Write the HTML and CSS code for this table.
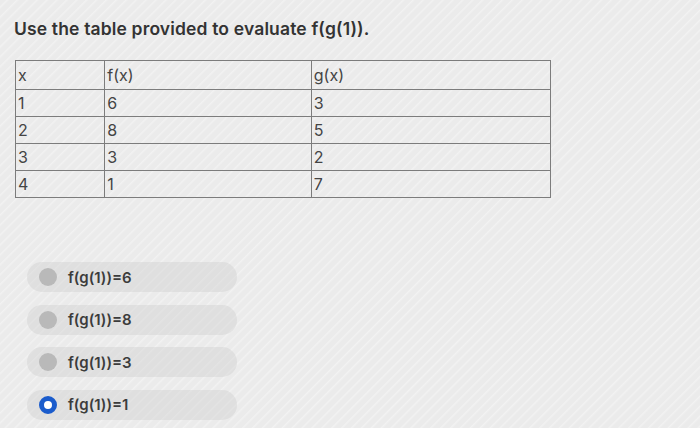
FILE: index.html
```html
<!DOCTYPE html>
<html>
<head>
<meta charset="utf-8">
<link rel="stylesheet" href="styles.css">
</head>
<body>
<div class="page">
  <h1 class="question">Use the table provided to evaluate f(g(1)).</h1>
  <table class="values">
    <tr><td class="c1">x</td><td class="c2">f(x)</td><td class="c3">g(x)</td></tr>
    <tr><td>1</td><td>6</td><td>3</td></tr>
    <tr><td>2</td><td>8</td><td>5</td></tr>
    <tr><td>3</td><td>3</td><td>2</td></tr>
    <tr><td>4</td><td>1</td><td>7</td></tr>
  </table>
  <div class="options">
    <div class="option"><span class="radio"></span><span class="label">f(g(1))=6</span></div>
    <div class="option"><span class="radio"></span><span class="label">f(g(1))=8</span></div>
    <div class="option"><span class="radio"></span><span class="label">f(g(1))=3</span></div>
    <div class="option"><span class="radio selected"></span><span class="label">f(g(1))=1</span></div>
  </div>
</div>
</body>
</html>
```
FILE: styles.css
```css
html, body {
  margin: 0;
  padding: 0;
}
body {
  width: 700px;
  height: 428px;
  overflow: hidden;
  background-color: #ebebeb;
  background-image: repeating-linear-gradient(135deg, rgba(255,255,255,0) 0px, rgba(255,255,255,0) 4px, rgba(255,255,255,0.35) 5px, rgba(255,255,255,0) 7px);
  font-family: "Inter", "Lato", sans-serif;
  color: #3a3a3a;
}
.page {
  padding: 17px 0 0 14px;
}
.question {
  margin: 0;
  font-size: 17.5px;
  font-weight: 600;
  line-height: 24px;
  color: #333;
  letter-spacing: 0.15px;
}
.values {
  margin-top: 19px;
  margin-left: 1px;
  border-collapse: collapse;
  width: 536px;
  font-size: 16px;
  color: #444;
}
.values td {
  border: 1.5px solid #7c7c7c;
  height: 26px;
  padding: 0 0 0 2px;
  vertical-align: middle;
  line-height: 18px;
}
.values tr:first-child td {
  height: 28px;
}
.values .c1 { width: 87px; }
.values .c2 { width: 205px; }
.values .c3 { width: 238px; }
.options {
  margin-top: 64px;
  margin-left: 13px;
  display: flex;
  flex-direction: column;
  gap: 12.5px;
}
.option {
  width: 210px;
  height: 30px;
  border-radius: 15px;
  background: rgba(200,200,200,0.35);
  display: flex;
  align-items: center;
  padding-left: 12px;
  box-sizing: border-box;
}
.radio {
  width: 18px;
  height: 18px;
  border-radius: 50%;
  background: #b9b9b9;
  flex: none;
  box-sizing: border-box;
}
.radio.selected {
  background: #fff;
  border: 5.5px solid #1b5ccc;
}
.label {
  margin-left: 11px;
  font-size: 15px;
  font-weight: 600;
  color: #3c3c3c;
}
```
